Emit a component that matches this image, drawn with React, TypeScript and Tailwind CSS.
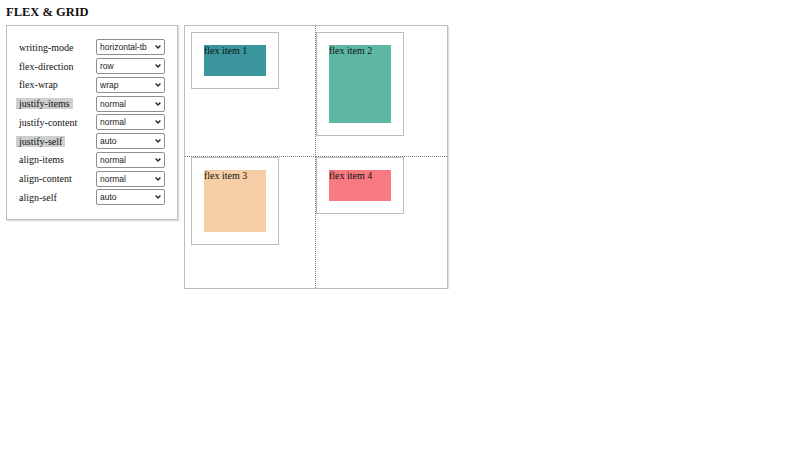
import React from 'react';

const controls: { label: string; value: string; options: string[]; marked?: boolean }[] = [
  { label: 'writing-mode', value: 'horizontal-tb', options: ['horizontal-tb', 'vertical-rl', 'vertical-lr'] },
  { label: 'flex-direction', value: 'row', options: ['row', 'row-reverse', 'column', 'column-reverse'] },
  { label: 'flex-wrap', value: 'wrap', options: ['nowrap', 'wrap', 'wrap-reverse'] },
  { label: 'justify-items', value: 'normal', options: ['normal', 'start', 'center', 'end', 'stretch'], marked: true },
  { label: 'justify-content', value: 'normal', options: ['normal', 'flex-start', 'center', 'flex-end', 'space-between'] },
  { label: 'justify-self', value: 'auto', options: ['auto', 'start', 'center', 'end', 'stretch'], marked: true },
  { label: 'align-items', value: 'normal', options: ['normal', 'flex-start', 'center', 'flex-end', 'stretch'] },
  { label: 'align-content', value: 'normal', options: ['normal', 'flex-start', 'center', 'flex-end', 'stretch'] },
  { label: 'align-self', value: 'auto', options: ['auto', 'flex-start', 'center', 'flex-end', 'stretch'] },
];

function Chevron() {
  return (
    <svg width="6" height="4" viewBox="0 0 6 4" className="pointer-events-none absolute right-[4px] top-[6px]">
      <path d="M0.6 0.6 L3 3 L5.4 0.6" fill="none" stroke="#222" strokeWidth="1.4" />
    </svg>
  );
}

function Item({ label, color, h }: { label: string; color: string; h: string }) {
  return (
    <div className="w-fit border border-[#bcbcbc] p-[12px]">
      <div className={`w-[62px] ${h} ${color} text-[10px] leading-[11px] text-[#111]`}>{label}</div>
    </div>
  );
}

export default function App() {
  return (
    <div className="px-[6px] pt-[5px] font-['Liberation_Serif',serif] text-[#111]">
      <h1 className="text-[12.5px] leading-[15px] font-bold">FLEX &amp; GRID</h1>

      <div className="mt-[5px] flex items-start gap-[6px]">
        <div className="w-[172px] h-[195px] border border-[#bdbdbd] shadow-[1px_1px_2px_rgba(0,0,0,0.18)] pt-[12px] pl-[9px]">
          {controls.map((c) => (
            <div key={c.label} className="flex items-center h-[18.75px]">
              <div className="w-[80px] flex">
                <span className={`px-[3px] text-[10px] leading-[11px] ${c.marked ? 'bg-[#cfcfcf]' : ''}`}>
                  {c.label}
                </span>
              </div>
              <div className="relative flex">
                <select
                  defaultValue={c.value}
                  className="block appearance-none w-[69px] h-[16px] border border-[#8f8f8f] rounded-[2px] bg-white pl-[3px] text-[8.5px] leading-[14px] font-['Liberation_Sans',sans-serif] text-[#222]"
                >
                  {c.options.map((o) => (
                    <option key={o} value={o}>{o}</option>
                  ))}
                </select>
                <Chevron />
              </div>
            </div>
          ))}
        </div>

        <div className="w-[264px] h-[264px] border border-[#bdbdbd] shadow-[1px_1px_1px_rgba(0,0,0,0.12)]">
          <div className="grid grid-cols-2 grid-rows-2 h-full">
            <div className="border-r border-b border-dotted border-[#7a7a7a] pt-[6px] pl-[6px]">
              <Item label="flex item 1" color="bg-[#3a969c]" h="h-[31px]" />
            </div>
            <div className="border-b border-dotted border-[#7a7a7a] pt-[6px]">
              <Item label="flex item 2" color="bg-[#5eb7a4]" h="h-[78px]" />
            </div>
            <div className="border-r border-dotted border-[#7a7a7a] pl-[6px]">
              <Item label="flex item 3" color="bg-[#f5cea6]" h="h-[62px]" />
            </div>
            <div>
              <Item label="flex item 4" color="bg-[#f67a80]" h="h-[31px]" />
            </div>
          </div>
        </div>
      </div>
    </div>
  );
}
